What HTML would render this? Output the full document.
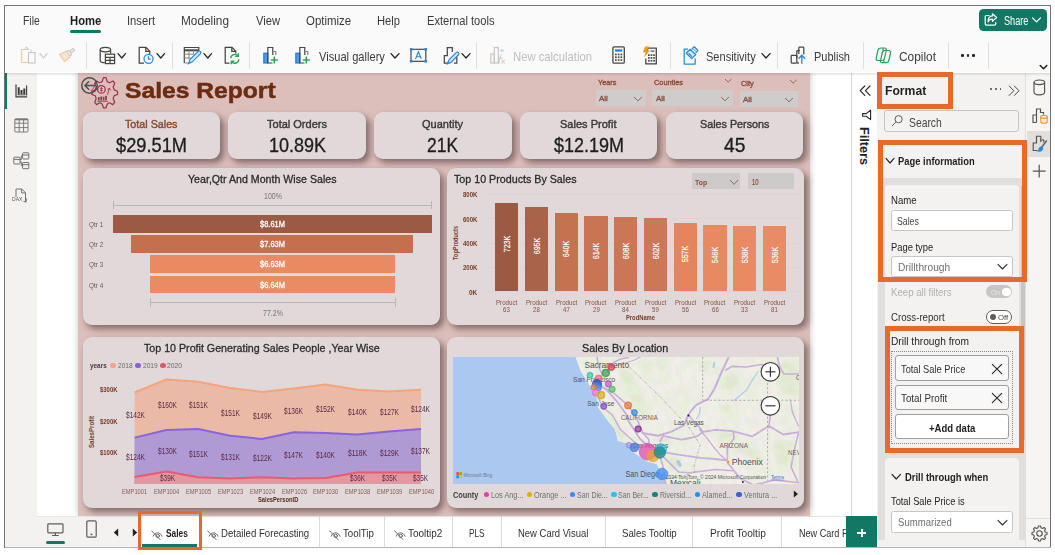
<!DOCTYPE html>
<html><head><meta charset="utf-8"><title>Sales Report</title><style>
html,body{margin:0;padding:0;}
body{width:1055px;height:555px;overflow:hidden;background:#fff;position:relative;font-family:"Liberation Sans",sans-serif;}
.a{position:absolute;display:block;box-sizing:border-box;}
.t{position:absolute;white-space:nowrap;transform-origin:0 50%;display:block;}
</style></head><body>
<div class="a" style="left:5.00px;top:6.00px;width:1045.00px;height:66.50px;background:#ffffff;"></div>
<div class="a" style="left:6.30px;top:7.30px;width:1042.70px;height:65.20px;background:#fafafa;"></div>
<div class="a" style="left:5.00px;top:72.50px;width:32.30px;height:474.50px;background:#f3f2f1;"></div>
<div class="a" style="left:4.50px;top:72.50px;width:2.10px;height:36.00px;background:#117865;"></div>
<div class="a" style="left:37.30px;top:72.50px;width:813.70px;height:443.50px;background:#ffffff;"></div>
<span class="t" style="left:22.50px;top:14.95px;font-size:12.5px;line-height:12.5px;color:#3b3a39;transform:scaleX(0.8291);">File</span>
<span class="t" style="left:70.00px;top:14.95px;font-size:12.5px;line-height:12.5px;color:#201f1e;transform:scaleX(0.9013);font-weight:bold;">Home</span>
<div class="a" style="left:70.00px;top:30.30px;width:31.30px;height:3.20px;background:#117865;border-radius:1.5px;"></div>
<span class="t" style="left:127.00px;top:14.95px;font-size:12.5px;line-height:12.5px;color:#3b3a39;transform:scaleX(0.8956);">Insert</span>
<span class="t" style="left:181.00px;top:14.95px;font-size:12.5px;line-height:12.5px;color:#3b3a39;transform:scaleX(0.9462);">Modeling</span>
<span class="t" style="left:255.50px;top:14.95px;font-size:12.5px;line-height:12.5px;color:#3b3a39;transform:scaleX(0.8932);">View</span>
<span class="t" style="left:305.50px;top:14.95px;font-size:12.5px;line-height:12.5px;color:#3b3a39;transform:scaleX(0.9165);">Optimize</span>
<span class="t" style="left:377.00px;top:14.95px;font-size:12.5px;line-height:12.5px;color:#3b3a39;transform:scaleX(0.8946);">Help</span>
<span class="t" style="left:427.00px;top:14.95px;font-size:12.5px;line-height:12.5px;color:#3b3a39;transform:scaleX(0.8913);">External tools</span>
<div class="a" style="left:978.60px;top:9.10px;width:68.60px;height:21.60px;background:#117865;border-radius:4.5px;"></div>
<svg class="a" style="left:983.20px;top:12.20px;" width="15.4" height="15.4" viewBox="0 0 14 14"><g fill="none" stroke="#fff" stroke-width="1.1" stroke-linecap="round" stroke-linejoin="round"><path d="M5.5 3.2H3.2A1.2 1.2 0 0 0 2 4.4v6.4A1.2 1.2 0 0 0 3.200 12h7.2a1.2 1.2 0 0 0 1.2-1.2V9.6"/><path d="M8.6 1.6 12.4 5 8.600 8.400V6.4C6.4 6.400 5.200 7.200 4.600 9c0-3.200 1.600-5.200 4-5.400z"/></g></svg>
<span class="t" style="left:1004.20px;top:14.60px;font-size:12px;line-height:12px;color:#ffffff;transform:scaleX(0.7619);">Share</span>
<svg class="a" style="left:1031.20px;top:16.30px;" width="11" height="8" viewBox="0 0 11 8"><path d="M1.5 1.8 5.5 5.800 9.500 1.800" fill="none" stroke="#fff" stroke-width="1.2" stroke-linecap="round" stroke-linejoin="round"/></svg>
<div class="a" style="left:85.50px;top:42.00px;width:1.00px;height:27.00px;background:#e1dfdd;"></div>
<div class="a" style="left:171.50px;top:42.00px;width:1.00px;height:27.00px;background:#e1dfdd;"></div>
<div class="a" style="left:249.30px;top:42.00px;width:1.00px;height:27.00px;background:#e1dfdd;"></div>
<div class="a" style="left:476.00px;top:42.00px;width:1.00px;height:27.00px;background:#e1dfdd;"></div>
<div class="a" style="left:669.70px;top:42.00px;width:1.00px;height:27.00px;background:#e1dfdd;"></div>
<div class="a" style="left:777.10px;top:42.00px;width:1.00px;height:27.00px;background:#e1dfdd;"></div>
<div class="a" style="left:862.50px;top:42.00px;width:1.00px;height:27.00px;background:#e1dfdd;"></div>
<div class="a" style="left:947.50px;top:42.00px;width:1.00px;height:27.00px;background:#e1dfdd;"></div>
<div class="a" style="left:987.50px;top:42.00px;width:1.00px;height:27.00px;background:#e1dfdd;"></div>
<svg class="a" style="left:20.00px;top:46.00px;" width="17" height="19" viewBox="0 0 17 19"><g fill="none" stroke-width="1.1"><path d="M5 3.5H1.600V16.500H8" stroke="#f2c9a0"/><path d="M4.500 3.500 6.500 1.200 8.500 3.500Z" stroke="#d0d0d0" fill="#fafafa"/><path d="M11 3.500v3" stroke="#f2c9a0"/><rect x="8.500" y="6.500" width="6.500" height="10.500" stroke="#c8c6c4" fill="#fafafa"/></g></svg>
<svg class="a" style="left:38.50px;top:52.00px;" width="9" height="8" viewBox="0 0 9 8"><path d="M1 1.6 4.5 6 8.0 1.6" fill="none" stroke="#c8c6c4" stroke-width="1.1" stroke-linecap="round" stroke-linejoin="round"/></svg>
<svg class="a" style="left:58.00px;top:47.00px;" width="18" height="16" viewBox="0 0 18 16"><g fill="none" stroke-width="1.1" stroke-linejoin="round"><path d="M1.500 7.500 9 4 12 10 6.500 14.500Z" stroke="#f2c39a" fill="#fbe6d3"/><path d="M9.500 4.500 11.500 3.500 13.500 7.500 11.800 8.700" stroke="#c8c6c4"/><path d="M12.200 3.800 15.300 1.500 16.600 3.600 13.300 5.800" stroke="#c8c6c4"/></g></svg>
<svg class="a" style="left:98.50px;top:46.00px;" width="17" height="19" viewBox="0 0 17 19"><g fill="none" stroke="#484644" stroke-width="1.25"><path d="M1.200 3.600v10.800c0 1.300 2 2.200 4.600 2.200"/><ellipse cx="6.400" cy="3.600" rx="5.200" ry="2.300"/><path d="M11.600 3.600v4"/><rect x="6.400" y="8.200" width="9.200" height="9.400" fill="#fafafa"/><path d="M6.400 11.300h9.200M6.400 14.400h9.200M11 11.300v6.300"/></g></svg>
<svg class="a" style="left:117.00px;top:52.00px;" width="9.5" height="8" viewBox="0 0 9.5 8"><path d="M1 1.6 4.8 6 8.5 1.6" fill="none" stroke="#252423" stroke-width="1.3" stroke-linecap="round" stroke-linejoin="round"/></svg>
<svg class="a" style="left:138.00px;top:46.00px;" width="17" height="19" viewBox="0 0 17 19"><g fill="none" stroke-width="1.25"><path d="M6 17H1.200V1.400H8L11.800 5.200V8" stroke="#484644"/><path d="M7.800 1.600V5.400H11.600" stroke="#484644"/><circle cx="10.500" cy="12.800" r="4.500" stroke="#2b88d8" fill="#fafafa"/><path d="M10.500 10.200v2.800h2.200" stroke="#2b88d8"/></g></svg>
<svg class="a" style="left:156.30px;top:52.00px;" width="9.5" height="8" viewBox="0 0 9.5 8"><path d="M1 1.6 4.8 6 8.5 1.6" fill="none" stroke="#252423" stroke-width="1.3" stroke-linecap="round" stroke-linejoin="round"/></svg>
<svg class="a" style="left:182.50px;top:46.00px;" width="19" height="19" viewBox="0 0 19 19"><g fill="none" stroke-width="1.2"><path d="M1.300 17V1.500H15.800V5" stroke="#484644"/><path d="M1.300 4.300H15.800" stroke="#484644" stroke-width="2"/><path d="M1.300 8.200H10M1.300 12H7.500M6 4.300V13.500M10.500 4.300V8.500M1.300 17H5" stroke="#8a8886" stroke-width="1"/><path d="M5.500 17.600 7 13.500 15 5.500a1.600 1.600 0 0 1 2.300 2.300L9.300 15.800Z" stroke="#2b88d8" fill="#d6ebfb"/></g></svg>
<svg class="a" style="left:202.60px;top:52.00px;" width="9.5" height="8" viewBox="0 0 9.5 8"><path d="M1 1.6 4.8 6 8.5 1.6" fill="none" stroke="#252423" stroke-width="1.3" stroke-linecap="round" stroke-linejoin="round"/></svg>
<svg class="a" style="left:224.00px;top:46.00px;" width="17" height="19" viewBox="0 0 17 19"><g fill="none" stroke-width="1.25"><path d="M5.500 17H1.200V1.400H8L11.800 5.200V7.500" stroke="#484644"/><path d="M7.800 1.600V5.400H11.600" stroke="#484644"/><path d="M6.800 12.300a4 4 0 0 1 7.200-2.300M14.800 13.300a4 4 0 0 1-7.200 2.300" stroke="#2ea44f" stroke-width="1.4"/><path d="M14.300 7.300V10.300H11.300M7.300 18.300V15.300H10.300" stroke="#2ea44f" stroke-width="1.4"/></g></svg>
<svg class="a" style="left:262.80px;top:46.00px;" width="16" height="19" viewBox="0 0 16 19"><g fill="none" stroke-width="1.2"><rect x=".800" y="7.200" width="4" height="9.800" fill="#4a9be0" stroke="#2b7cd3"/><path d="M9.500 17H4.800V1.500H9.800V9" stroke="#484644"/><path d="M9.800 5.500H12.800V9" stroke="#8a8886"/><path d="M11.300 10.500V17.500M7.800 14H14.800" stroke="#2ea44f" stroke-width="1.500"/></g></svg>
<svg class="a" style="left:295.00px;top:46.00px;" width="16" height="19" viewBox="0 0 16 19"><g fill="none" stroke-width="1.2"><rect x=".800" y="7.200" width="4" height="9.800" fill="#4a9be0" stroke="#2b7cd3"/><path d="M9.500 17H4.800V1.500H9.800V9" stroke="#484644"/><path d="M9.800 5.500H12.800V9" stroke="#8a8886"/><path d="M11.300 10.500V17.500M7.800 14H14.800" stroke="#2ea44f" stroke-width="1.500"/></g></svg>
<span class="t" style="left:318.50px;top:50.80px;font-size:12.2px;line-height:12.2px;color:#3b3a39;transform:scaleX(0.9124);">Visual gallery</span>
<svg class="a" style="left:389.80px;top:52.00px;" width="10" height="8" viewBox="0 0 10 8"><path d="M1 1.6 5.0 6 9.0 1.6" fill="none" stroke="#252423" stroke-width="1.3" stroke-linecap="round" stroke-linejoin="round"/></svg>
<svg class="a" style="left:408.50px;top:47.00px;" width="19" height="17" viewBox="0 0 19 17"><rect x="2" y="2.300" width="14.800" height="12" fill="none" stroke="#484644" stroke-width="1.200"/><g fill="#2b88d8"><rect x=".800" y="1.100" width="2.600" height="2.600"/><rect x="15.500" y="1.100" width="2.600" height="2.600"/><rect x=".800" y="13" width="2.600" height="2.600"/><rect x="15.500" y="13" width="2.600" height="2.600"/></g><path d="M6.500 12 9.400 4.800 12.300 12M7.500 9.800H11.300" fill="none" stroke="#2b88d8" stroke-width="1.100"/></svg>
<svg class="a" style="left:442.50px;top:46.00px;" width="17" height="19" viewBox="0 0 17 19"><g fill="none" stroke-width="1.250"><path d="M5 17H1.300V9.500H4.300V1.500H9.300V6" stroke="#484644"/><path d="M11 17H13.800V10.500" stroke="#484644"/><path d="M4.500 17.800 6 13.800 13.200 6.600a1.500 1.500 0 0 1 2.200 2.200L8.300 16.200Z" stroke="#2b88d8" fill="#d6ebfb"/></g></svg>
<svg class="a" style="left:461.00px;top:52.00px;" width="10" height="8" viewBox="0 0 10 8"><path d="M1 1.6 5.0 6 9.0 1.6" fill="none" stroke="#252423" stroke-width="1.3" stroke-linecap="round" stroke-linejoin="round"/></svg>
<svg class="a" style="left:489.50px;top:46.00px;" width="16" height="19" viewBox="0 0 16 19"><g fill="none" stroke="#c8c6c4" stroke-width="1.200"><rect x=".800" y="8" width="3.500" height="9"/><rect x="4.300" y="1.500" width="4" height="15.500"/><path d="M10.500 4.500h3" stroke="#a9d3f2" stroke-width="2"/><path d="M8 17.500c2 0 1.500-9 4-9.500M9 12h3.500M11.500 17.500l3.500-4M11.800 13.500l3 4" stroke-width="1"/></g></svg>
<span class="t" style="left:513.00px;top:50.80px;font-size:12.2px;line-height:12.2px;color:#c0bebc;transform:scaleX(0.9246);">New calculation</span>
<svg class="a" style="left:611.50px;top:46.00px;" width="13.5" height="18.5" viewBox="0 0 13.5 18.5"><rect x=".900" y=".900" width="11.400" height="16.300" rx="1.200" fill="#fafafa" stroke="#484644" stroke-width="1.300"/><rect x="3" y="3.300" width="7.200" height="2.400" fill="#2b88d8"/><g fill="#484644"><rect x="3" y="7.600" width="1.700" height="1.700"/><rect x="5.800" y="7.600" width="1.700" height="1.700"/><rect x="8.500" y="7.600" width="1.700" height="1.700"/><rect x="3" y="10.400" width="1.700" height="1.700"/><rect x="5.800" y="10.400" width="1.700" height="1.700"/><rect x="8.500" y="10.400" width="1.700" height="1.700"/><rect x="3" y="13.200" width="1.700" height="1.700"/><rect x="5.800" y="13.200" width="1.700" height="1.700"/><rect x="8.500" y="13.200" width="1.700" height="1.700"/></g></svg>
<svg class="a" style="left:641.50px;top:45.50px;" width="16" height="19" viewBox="0 0 16 19"><path d="M5.500 6.500V2.200H14.300V17.800H3.800V12.500" fill="#fafafa" stroke="#484644" stroke-width="1.300"/><rect x="8.500" y="4.300" width="4" height="1.800" fill="#8a8886"/><g fill="#484644"><rect x="6" y="8.300" width="1.700" height="1.700"/><rect x="8.600" y="8.300" width="1.700" height="1.700"/><rect x="11.200" y="8.300" width="1.700" height="1.700"/><rect x="6" y="11.100" width="1.700" height="1.700"/><rect x="8.600" y="11.100" width="1.700" height="1.700"/><rect x="11.200" y="11.100" width="1.700" height="1.700"/><rect x="6" y="13.900" width="1.700" height="1.700"/><rect x="8.600" y="13.900" width="1.700" height="1.700"/><rect x="11.200" y="13.900" width="1.700" height="1.700"/></g><path d="M3.200 .500H7.300L5.200 4.300H7.800L2.200 11.500 3.600 6.300H.800Z" fill="#f7941d"/></svg>
<svg class="a" style="left:683.00px;top:45.50px;" width="16" height="19" viewBox="0 0 16 19"><g fill="none" stroke="#2b88d8" stroke-width="1.250" stroke-linejoin="round"><path d="M5 3H1.200V18H12.200V12.500"/><path d="M3.300 7.200 7.200 3.300 12.600 8.700 8.700 12.600Z" fill="#d6ebfb"/><path d="M5.700 7.300 9 10.600"/><path d="M8.800 3.200 11.200 .800 15 4.600 12.600 7"/><path d="M10.300 2.800 13.200 5.700M12 1.400 14.500 3.900" stroke-width="1"/></g></svg>
<span class="t" style="left:706.30px;top:50.80px;font-size:12.2px;line-height:12.2px;color:#3b3a39;transform:scaleX(0.9050);">Sensitivity</span>
<svg class="a" style="left:761.30px;top:52.00px;" width="10" height="8" viewBox="0 0 10 8"><path d="M1 1.6 5.0 6 9.0 1.6" fill="none" stroke="#252423" stroke-width="1.3" stroke-linecap="round" stroke-linejoin="round"/></svg>
<svg class="a" style="left:790.00px;top:46.00px;" width="17" height="19" viewBox="0 0 17 19"><g fill="none" stroke-width="1.250"><rect x="1.200" y="9.300" width="5.600" height="7.700" rx=".800" stroke="#484644"/><path d="M6.800 12V5.500a.800 .800 0 0 1 .8-.8H9.800" stroke="#484644"/><path d="M8.800 8V2a.800 .800 0 0 1 .8-.8H13a.800 .800 0 0 1 .8 .8V8.500" stroke="#484644"/><path d="M6.800 17H9" stroke="#484644"/><path d="M11.800 17.800V9.800M8.500 12.800 11.800 9.300 15.200 12.800" stroke="#2b88d8" stroke-width="1.400"/></g></svg>
<span class="t" style="left:814.00px;top:50.80px;font-size:12.2px;line-height:12.2px;color:#3b3a39;transform:scaleX(0.8997);">Publish</span>
<svg class="a" style="left:874.50px;top:47.00px;" width="17" height="16.5" viewBox="0 0 17 16.5"><g fill="none" stroke="#2a9d5c" stroke-width="1.200" stroke-linejoin="round"><path d="M6.200 1H9.500C11 1 11.500 2 11.200 3.500L9.500 11.500C9.200 13 8 13.500 6.800 13.500H3C1.500 13.500 .800 12.500 1.200 11L3 3C3.400 1.500 4.800 1 6.200 1Z"/><path d="M9.800 3.500H13.600C15.200 3.500 15.900 4.500 15.500 6L13.800 13.500C13.500 15 12.300 15.700 10.800 15.700H7.200C5.800 15.700 5.300 14.700 5.600 13.300L7.300 5.500C7.600 4.200 8.500 3.500 9.800 3.500Z"/><path d="M7.500 1.200C8.500 2 8.300 3.500 8 4.800M9.300 15.500C8.300 14.500 8.600 13 9 11.800"/></g></svg>
<span class="t" style="left:898.50px;top:50.80px;font-size:12.2px;line-height:12.2px;color:#3b3a39;transform:scaleX(0.9743);">Copilot</span>
<div class="a" style="left:961.00px;top:54.20px;width:2.60px;height:2.60px;background:#201f1e;border-radius:50%;"></div>
<div class="a" style="left:966.50px;top:54.20px;width:2.60px;height:2.60px;background:#201f1e;border-radius:50%;"></div>
<div class="a" style="left:972.00px;top:54.20px;width:2.60px;height:2.60px;background:#201f1e;border-radius:50%;"></div>
<svg class="a" style="left:1039.00px;top:63.50px;" width="9" height="7" viewBox="0 0 9 7"><path d="M1.200 1.500 4.500 4.800 7.800 1.500" fill="none" stroke="#201f1e" stroke-width="1.500" stroke-linecap="round" stroke-linejoin="round"/></svg>
<svg class="a" style="left:14.50px;top:83.50px;" width="13" height="14" viewBox="0 0 13 14"><g fill="none" stroke="#3b3a39"><path d="M1 .600V12.800H12.200" stroke-width="1.200"/><path d="M3.700 11V3.200M6.500 11V6M9.300 11V4.500" stroke-width="2"/><path d="M11.600 11.500V1.500" stroke-width="1.100"/><path d="M2.600 11H10.500" stroke-width="1" stroke="#8a8886"/></g></svg>
<svg class="a" style="left:13.50px;top:117.50px;" width="15" height="15" viewBox="0 0 15 15"><g fill="none" stroke="#7a7876" stroke-width=".950"><rect x=".800" y=".800" width="13.200" height="13.200" rx="1"/><path d="M.800 5.200H14M.800 9.600H14M5.200 .800V14M9.600 .800V14"/><path d="M.800 1.600H14" stroke-width="1.400"/></g></svg>
<svg class="a" style="left:12.50px;top:151.50px;" width="17" height="18" viewBox="0 0 17 18"><g fill="none" stroke="#6e6c6a" stroke-width=".950"><rect x=".800" y="5.200" width="6.200" height="6.800" rx=".600"/><path d="M.800 7.400H7"/><rect x="9.600" y=".800" width="6.200" height="6.200" rx=".600"/><path d="M9.600 3H15.800"/><rect x="9.600" y="10.500" width="6.200" height="6.200" rx=".600"/><path d="M9.600 12.700H15.800"/><path d="M7 7.500H8.300V3.900H9.600M7 9.800H8.300V13.600H9.600"/></g></svg>
<svg class="a" style="left:12.00px;top:187.50px;" width="16" height="16.5" viewBox="0 0 16 16.5"><g fill="none" stroke="#6e6c6a" stroke-width=".950"><path d="M4 9V1H9.800L13.500 4.700V13.500H11.500"/><path d="M9.600 1.200V4.900H13.300"/><path d="M13.500 9.500c1.400 1.500 1.400 3.800 0 5.300" stroke-width=".800"/></g></svg>
<span class="t" style="left:12.30px;top:197.40px;font-size:5.2px;line-height:5.2px;color:#605e5c;transform:scaleX(0.9820);">DAX</span>
<div class="a" style="left:37.30px;top:516.00px;width:808.70px;height:31.00px;background:#f3f2f1;"></div>
<div class="a" style="left:202.00px;top:516.00px;width:644.00px;height:31.00px;background:#ffffff;"></div>
<div class="a" style="left:37.30px;top:515.60px;width:813.70px;height:0.80px;background:#e8e6e4;"></div>
<svg class="a" style="left:46.50px;top:522.50px;" width="17" height="13.5" viewBox="0 0 17 13.5"><g fill="none" stroke="#605e5c" stroke-width="1.200"><rect x=".800" y=".800" width="15.200" height="9" rx=".800"/><path d="M8.400 9.800V12.300M5 12.500H11.800"/></g></svg>
<div class="a" style="left:45.50px;top:540.80px;width:19.30px;height:2.80px;background:#117865;border-radius:1.5px;"></div>
<svg class="a" style="left:85.80px;top:520.00px;" width="11" height="18" viewBox="0 0 11 18"><g fill="none" stroke="#605e5c" stroke-width="1.200"><rect x=".800" y=".800" width="9.400" height="16.400" rx="1.300"/></g><rect x="4.600" y="13.600" width="1.800" height="1.600" fill="#605e5c"/></svg>
<svg class="a" style="left:113.00px;top:527.50px;" width="6" height="9" viewBox="0 0 6 9"><path d="M5.200 .600V8.400L.800 4.500Z" fill="#201f1e"/></svg>
<svg class="a" style="left:131.50px;top:527.50px;" width="6" height="9" viewBox="0 0 6 9"><path d="M.800 .600V8.400L5.200 4.500Z" fill="#201f1e"/></svg>
<div class="a" style="left:141.20px;top:514.00px;width:57.40px;height:33.00px;background:#ffffff;"></div>
<div class="a" style="left:142.00px;top:543.80px;width:55.40px;height:3.40px;background:#117865;"></div>
<svg class="a" style="left:151.30px;top:529.50px;" width="11.5" height="10.5" viewBox="0 0 11.5 10.5"><g fill="none" stroke="#605e5c" stroke-width=".900" stroke-linecap="round"><path d="M2.200 6.200C3.200 3.800 5 2.800 6.600 2.800 8.600 2.800 10.300 4.200 11 6.300"/><circle cx="6.700" cy="5.900" r="1.700"/><path d="M.600 .800 9.400 9.900"/></g></svg>
<span class="t" style="left:165.70px;top:527.55px;font-size:11.5px;line-height:11.5px;color:#201f1e;transform:scaleX(0.7287);font-weight:bold;">Sales</span>
<svg class="a" style="left:207.30px;top:529.50px;" width="11.5" height="10.5" viewBox="0 0 11.5 10.5"><g fill="none" stroke="#605e5c" stroke-width=".900" stroke-linecap="round"><path d="M2.200 6.200C3.200 3.800 5 2.800 6.600 2.800 8.600 2.800 10.300 4.200 11 6.300"/><circle cx="6.700" cy="5.900" r="1.700"/><path d="M.600 .800 9.400 9.900"/></g></svg>
<span class="t" style="left:221.30px;top:527.75px;font-size:11.5px;line-height:11.5px;color:#323130;transform:scaleX(0.8362);">Detailed Forecasting</span>
<svg class="a" style="left:329.30px;top:529.50px;" width="11.5" height="10.5" viewBox="0 0 11.5 10.5"><g fill="none" stroke="#605e5c" stroke-width=".900" stroke-linecap="round"><path d="M2.200 6.200C3.200 3.800 5 2.800 6.600 2.800 8.600 2.800 10.300 4.200 11 6.300"/><circle cx="6.700" cy="5.900" r="1.700"/><path d="M.600 .800 9.400 9.900"/></g></svg>
<span class="t" style="left:343.30px;top:527.75px;font-size:11.5px;line-height:11.5px;color:#323130;transform:scaleX(0.8432);">ToolTip</span>
<svg class="a" style="left:394.20px;top:529.50px;" width="11.5" height="10.5" viewBox="0 0 11.5 10.5"><g fill="none" stroke="#605e5c" stroke-width=".900" stroke-linecap="round"><path d="M2.200 6.200C3.200 3.800 5 2.800 6.600 2.800 8.600 2.800 10.300 4.200 11 6.300"/><circle cx="6.700" cy="5.900" r="1.700"/><path d="M.600 .800 9.400 9.900"/></g></svg>
<span class="t" style="left:408.00px;top:527.75px;font-size:11.5px;line-height:11.5px;color:#323130;transform:scaleX(0.8678);">Tooltip2</span>
<span class="t" style="left:469.00px;top:527.75px;font-size:11.5px;line-height:11.5px;color:#323130;transform:scaleX(0.7176);">PLS</span>
<span class="t" style="left:518.00px;top:527.75px;font-size:11.5px;line-height:11.5px;color:#323130;transform:scaleX(0.8228);">New Card Visual</span>
<span class="t" style="left:621.80px;top:527.75px;font-size:11.5px;line-height:11.5px;color:#323130;transform:scaleX(0.8416);">Sales Tooltip</span>
<span class="t" style="left:709.70px;top:527.75px;font-size:11.5px;line-height:11.5px;color:#323130;transform:scaleX(0.8847);">Profit Tooltip</span>
<span class="t" style="left:799.00px;top:527.75px;font-size:11.5px;line-height:11.5px;color:#323130;transform:scaleX(0.7906);">New Card F</span>
<div class="a" style="left:319.30px;top:516.00px;width:1.00px;height:31.00px;background:#dddbd9;"></div>
<div class="a" style="left:384.00px;top:516.00px;width:1.00px;height:31.00px;background:#dddbd9;"></div>
<div class="a" style="left:451.90px;top:516.00px;width:1.00px;height:31.00px;background:#dddbd9;"></div>
<div class="a" style="left:500.70px;top:516.00px;width:1.00px;height:31.00px;background:#dddbd9;"></div>
<div class="a" style="left:605.00px;top:516.00px;width:1.00px;height:31.00px;background:#dddbd9;"></div>
<div class="a" style="left:692.20px;top:516.00px;width:1.00px;height:31.00px;background:#dddbd9;"></div>
<div class="a" style="left:781.20px;top:516.00px;width:1.00px;height:31.00px;background:#dddbd9;"></div>
<div class="a" style="left:846.00px;top:516.40px;width:31.20px;height:30.60px;background:#117865;"></div>
<div class="a" style="left:857.30px;top:532.20px;width:8.60px;height:2.00px;background:#ffffff;"></div>
<div class="a" style="left:860.60px;top:528.90px;width:2.00px;height:8.60px;background:#ffffff;"></div>
<div class="a" style="left:37.3px;top:72.5px;width:813.7px;height:443.5px;overflow:hidden;"><div class="a" style="left:40.7px;top:-10px;width:732px;height:453.5px;background:#dcbeba;box-shadow:0 0 7px rgba(0,0,0,.22);"></div></div>
<div class="a" style="left:5.00px;top:72.50px;width:1045.00px;height:3.00px;background:linear-gradient(rgba(0,0,0,.12),rgba(0,0,0,0));"></div>
<svg class="a" style="left:90.00px;top:75.50px;" width="30" height="34" viewBox="0 0 30 34"><g fill="none" stroke="#a2304f" stroke-width="1.250" stroke-linejoin="round" stroke-linecap="round"><path d="M13.39 1.68L16.01 1.68L17.21 5.63L19.62 6.81L22.84 5.01L24.70 7.20L23.18 11.00L24.18 13.84L27.53 15.25L27.53 18.35L24.18 19.76L23.18 22.60L24.70 26.40L22.84 28.59L19.62 26.79L17.21 27.97L16.01 31.92L13.39 31.92L12.19 27.97L9.78 26.79L6.56 28.59L4.70 26.40L6.22 22.60L5.22 19.76L1.87 18.35L1.87 15.25L5.22 13.84L6.22 11.00L4.70 7.20L6.56 5.01L9.78 6.81L12.19 5.63Z"/><circle cx="11.4" cy="13.4" r="3.800"/><path d="M11.4 11.3V15.5M10.5 12.5H12.3M10.5 14.4H12.3" stroke-width=".800"/><path d="M8.8 24.5V21.1M11.2 24.5V20.5M13.6 24.5V20.8M16.0 24.5V19.7" stroke-width="1.700" stroke-linecap="butt"/><path d="M7.6 25.4H17.6" stroke-width=".800"/><path d="M17.6 18.3L19.3 12.3M18.0 13.7L19.3 12.1L20.5 14.0" stroke-width=".900"/><path d="M1.0 15.0Q4.0 13.5 5.5 7.0" stroke-width=".900"/></g></svg>
<svg class="a" style="left:80.00px;top:75.50px;" width="19.5" height="19.5" viewBox="0 0 19.5 19.5"><g fill="none" stroke="#48524f" stroke-width="1.500" stroke-linecap="round" stroke-linejoin="round"><circle cx="9.500" cy="9.500" r="7.750"/><path d="M14 9.500H5.200M8.600 5.700 4.900 9.500 8.600 13.300"/></g></svg>
<span class="t" style="left:125.40px;top:80.45px;font-size:22.5px;line-height:22.5px;color:#6b2c11;transform:scaleX(1.0949);font-weight:bold;-webkit-text-stroke:0.5px #6b2c11;">Sales Report</span>
<span class="t" style="left:597.50px;top:79.00px;font-size:8px;line-height:8px;color:#8a4b3a;transform:scaleX(0.9075);-webkit-text-stroke:0.35px #8a4b3a;">Years</span>
<div class="a" style="left:595.70px;top:90.00px;width:50.60px;height:15.80px;background:#cfcccc;"></div>
<span class="t" style="left:599.20px;top:95.30px;font-size:8px;line-height:8px;color:#8a4b3a;transform:scaleX(0.9897);-webkit-text-stroke:0.35px #8a4b3a;">All</span>
<svg class="a" style="left:633.30px;top:96.20px;" width="10" height="6.2" viewBox="0 0 10 6.2"><path d="M1 1 5.0 4.8 9.0 1" fill="none" stroke="#8a5f55" stroke-width=".900"/></svg>
<span class="t" style="left:653.80px;top:79.00px;font-size:8px;line-height:8px;color:#8a4b3a;transform:scaleX(0.9184);-webkit-text-stroke:0.35px #8a4b3a;">Counties</span>
<svg class="a" style="left:724.00px;top:78.30px;" width="8.5" height="5.5" viewBox="0 0 8.5 5.5"><path d="M1 1 4.2 4.1 7.5 1" fill="none" stroke="#8a5f55" stroke-width=".900"/></svg>
<div class="a" style="left:652.00px;top:90.00px;width:81.00px;height:15.80px;background:#cfcccc;"></div>
<span class="t" style="left:655.80px;top:95.30px;font-size:8px;line-height:8px;color:#8a4b3a;transform:scaleX(0.9897);-webkit-text-stroke:0.35px #8a4b3a;">All</span>
<svg class="a" style="left:720.30px;top:96.20px;" width="10" height="6.2" viewBox="0 0 10 6.2"><path d="M1 1 5.0 4.8 9.0 1" fill="none" stroke="#8a5f55" stroke-width=".900"/></svg>
<span class="t" style="left:741.30px;top:79.70px;font-size:8px;line-height:8px;color:#8a4b3a;transform:scaleX(0.9218);-webkit-text-stroke:0.35px #8a4b3a;">City</span>
<svg class="a" style="left:788.50px;top:78.60px;" width="8.5" height="5.5" viewBox="0 0 8.5 5.5"><path d="M1 1 4.2 4.1 7.5 1" fill="none" stroke="#8a5f55" stroke-width=".900"/></svg>
<div class="a" style="left:739.50px;top:91.00px;width:58.00px;height:15.80px;background:#cfcccc;"></div>
<span class="t" style="left:743.20px;top:96.30px;font-size:8px;line-height:8px;color:#8a4b3a;transform:scaleX(0.9897);-webkit-text-stroke:0.35px #8a4b3a;">All</span>
<svg class="a" style="left:784.20px;top:97.20px;" width="10" height="6.2" viewBox="0 0 10 6.2"><path d="M1 1 5.0 4.8 9.0 1" fill="none" stroke="#8a5f55" stroke-width=".900"/></svg>
<div class="a" style="left:82.50px;top:112.30px;width:137.70px;height:47.00px;background:#e0d8d9;border-radius:9px;box-shadow:3.5px 4px 6px rgba(75,55,55,.6);"></div>
<span class="t" style="left:125.15px;top:118.80px;font-size:11.4px;line-height:11.4px;color:#8b4a30;transform:scaleX(0.9414);-webkit-text-stroke:0.42px #8b4a30;">Total Sales</span>
<span class="t" style="left:115.90px;top:134.10px;font-size:21px;line-height:21px;color:#1e1e1e;transform:scaleX(0.8688);-webkit-text-stroke:0.35px #1e1e1e;">$29.51M</span>
<div class="a" style="left:228.25px;top:112.30px;width:137.70px;height:47.00px;background:#e0d8d9;border-radius:9px;box-shadow:3.5px 4px 6px rgba(75,55,55,.6);"></div>
<span class="t" style="left:267.15px;top:118.80px;font-size:11.4px;line-height:11.4px;color:#3a3a3a;transform:scaleX(0.9664);-webkit-text-stroke:0.42px #3a3a3a;">Total Orders</span>
<span class="t" style="left:268.65px;top:134.10px;font-size:21px;line-height:21px;color:#1e1e1e;transform:scaleX(0.8564);-webkit-text-stroke:0.35px #1e1e1e;">10.89K</span>
<div class="a" style="left:374.00px;top:112.30px;width:137.70px;height:47.00px;background:#e0d8d9;border-radius:9px;box-shadow:3.5px 4px 6px rgba(75,55,55,.6);"></div>
<span class="t" style="left:422.40px;top:118.80px;font-size:11.4px;line-height:11.4px;color:#3a3a3a;transform:scaleX(0.9657);-webkit-text-stroke:0.42px #3a3a3a;">Quantity</span>
<span class="t" style="left:427.40px;top:134.10px;font-size:21px;line-height:21px;color:#1e1e1e;transform:scaleX(0.8296);-webkit-text-stroke:0.35px #1e1e1e;">21K</span>
<div class="a" style="left:519.75px;top:112.30px;width:137.70px;height:47.00px;background:#e0d8d9;border-radius:9px;box-shadow:3.5px 4px 6px rgba(75,55,55,.6);"></div>
<span class="t" style="left:560.40px;top:118.80px;font-size:11.4px;line-height:11.4px;color:#3a3a3a;transform:scaleX(0.9692);-webkit-text-stroke:0.42px #3a3a3a;">Sales Profit</span>
<span class="t" style="left:553.65px;top:134.10px;font-size:21px;line-height:21px;color:#1e1e1e;transform:scaleX(0.8565);-webkit-text-stroke:0.35px #1e1e1e;">$12.19M</span>
<div class="a" style="left:665.50px;top:112.30px;width:137.70px;height:47.00px;background:#e0d8d9;border-radius:9px;box-shadow:3.5px 4px 6px rgba(75,55,55,.6);"></div>
<span class="t" style="left:699.65px;top:118.80px;font-size:11.4px;line-height:11.4px;color:#3a3a3a;transform:scaleX(0.9455);-webkit-text-stroke:0.42px #3a3a3a;">Sales Persons</span>
<span class="t" style="left:723.65px;top:134.10px;font-size:21px;line-height:21px;color:#1e1e1e;transform:scaleX(0.9204);-webkit-text-stroke:0.35px #1e1e1e;">45</span>
<div class="a" style="left:82.70px;top:168.00px;width:357.30px;height:157.00px;background:#e0d8d9;border-radius:9px;box-shadow:3.5px 4px 6px rgba(75,55,55,.6);"></div>
<div class="a" style="left:446.80px;top:168.00px;width:357.20px;height:157.00px;background:#e0d8d9;border-radius:9px;box-shadow:3.5px 4px 6px rgba(75,55,55,.6);"></div>
<div class="a" style="left:82.70px;top:337.00px;width:357.30px;height:170.70px;background:#e0d8d9;border-radius:9px;box-shadow:3.5px 4px 6px rgba(75,55,55,.6);"></div>
<div class="a" style="left:446.80px;top:337.00px;width:357.20px;height:170.70px;background:#e0d8d9;border-radius:9px;box-shadow:3.5px 4px 6px rgba(75,55,55,.6);"></div>
<span class="t" style="left:187.50px;top:174.15px;font-size:11.5px;line-height:11.5px;color:#2b2b2b;transform:scaleX(0.9243);-webkit-text-stroke:0.3px #2b2b2b;">Year,Qtr And Month Wise Sales</span>
<span class="t" style="left:264.00px;top:192.80px;font-size:8.2px;line-height:8.2px;color:#777777;transform:scaleX(0.8583);">100%</span>
<div class="a" style="left:113.00px;top:205.00px;width:319.00px;height:1.00px;background:#bdb6b6;"></div>
<div class="a" style="left:113.00px;top:200.80px;width:1.00px;height:8.70px;background:#bdb6b6;"></div>
<div class="a" style="left:431.30px;top:200.80px;width:1.00px;height:8.70px;background:#bdb6b6;"></div>
<div class="a" style="left:113.20px;top:214.50px;width:318.40px;height:18.20px;background:#9d5a42;"></div>
<span class="t" style="left:260.00px;top:219.80px;font-size:8.6px;line-height:8.6px;color:#ffffff;transform:scaleX(0.8715);-webkit-text-stroke:0.3px #ffffff;">$8.61M</span>
<span class="t" style="left:89.00px;top:220.70px;font-size:7.4px;line-height:7.4px;color:#6b5a58;transform:scaleX(0.8633);">Qtr 1</span>
<div class="a" style="left:131.40px;top:235.00px;width:281.80px;height:18.00px;background:#c4704f;"></div>
<span class="t" style="left:260.00px;top:240.20px;font-size:8.6px;line-height:8.6px;color:#ffffff;transform:scaleX(0.8715);-webkit-text-stroke:0.3px #ffffff;">$7.63M</span>
<span class="t" style="left:89.00px;top:241.10px;font-size:7.4px;line-height:7.4px;color:#6b5a58;transform:scaleX(0.8633);">Qtr 2</span>
<div class="a" style="left:149.80px;top:255.30px;width:245.20px;height:17.90px;background:#e98a63;"></div>
<span class="t" style="left:260.00px;top:260.45px;font-size:8.6px;line-height:8.6px;color:#ffffff;transform:scaleX(0.8715);-webkit-text-stroke:0.3px #ffffff;">$6.63M</span>
<span class="t" style="left:89.00px;top:261.35px;font-size:7.4px;line-height:7.4px;color:#6b5a58;transform:scaleX(0.8633);">Qtr 3</span>
<div class="a" style="left:149.60px;top:275.50px;width:245.70px;height:17.80px;background:#e98b65;"></div>
<span class="t" style="left:260.00px;top:280.60px;font-size:8.6px;line-height:8.6px;color:#ffffff;transform:scaleX(0.8715);-webkit-text-stroke:0.3px #ffffff;">$6.64M</span>
<span class="t" style="left:89.00px;top:281.50px;font-size:7.4px;line-height:7.4px;color:#6b5a58;transform:scaleX(0.8633);">Qtr 4</span>
<div class="a" style="left:149.50px;top:302.00px;width:246.00px;height:1.00px;background:#bdb6b6;"></div>
<div class="a" style="left:149.50px;top:298.00px;width:1.00px;height:9.00px;background:#bdb6b6;"></div>
<div class="a" style="left:394.50px;top:298.00px;width:1.00px;height:9.00px;background:#bdb6b6;"></div>
<span class="t" style="left:262.50px;top:310.10px;font-size:8.2px;line-height:8.2px;color:#777777;transform:scaleX(0.8602);">77.2%</span>
<span class="t" style="left:453.50px;top:174.15px;font-size:11.5px;line-height:11.5px;color:#2b2b2b;transform:scaleX(0.9302);-webkit-text-stroke:0.3px #2b2b2b;">Top 10 Products By Sales</span>
<span class="t" style="left:469.10px;top:288.60px;font-size:7px;line-height:7px;color:#7a3b24;transform:scaleX(0.9164);font-weight:bold;">0K</span>
<div class="a" style="left:484px;top:291.30px;width:315px;height:0;border-top:1px dotted #d3c9c9;opacity:.55;"></div>
<span class="t" style="left:462.90px;top:264.25px;font-size:7px;line-height:7px;color:#7a3b24;transform:scaleX(0.8605);font-weight:bold;">200K</span>
<div class="a" style="left:484px;top:266.95px;width:315px;height:0;border-top:1px dotted #d3c9c9;opacity:.55;"></div>
<span class="t" style="left:462.90px;top:239.90px;font-size:7px;line-height:7px;color:#7a3b24;transform:scaleX(0.8605);font-weight:bold;">400K</span>
<div class="a" style="left:484px;top:242.60px;width:315px;height:0;border-top:1px dotted #d3c9c9;opacity:.55;"></div>
<span class="t" style="left:462.90px;top:215.55px;font-size:7px;line-height:7px;color:#7a3b24;transform:scaleX(0.8605);font-weight:bold;">600K</span>
<div class="a" style="left:484px;top:218.25px;width:315px;height:0;border-top:1px dotted #d3c9c9;opacity:.55;"></div>
<span class="t" style="left:462.90px;top:191.20px;font-size:7px;line-height:7px;color:#7a3b24;transform:scaleX(0.8605);font-weight:bold;">800K</span>
<div class="a" style="left:484px;top:193.90px;width:315px;height:0;border-top:1px dotted #d3c9c9;opacity:.55;"></div>
<span class="t" style="left:456.30px;top:243.00px;font-size:6.5px;line-height:6.5px;color:#7a3b24;transform:translate(-50%,-50%) rotate(-90deg) scaleX(0.8586);transform-origin:50% 50%;font-weight:bold;">TopProducts</span>
<div class="a" style="left:495.00px;top:203.28px;width:23.30px;height:87.52px;background:#9d5a42;"></div>
<span class="t" style="left:506.95px;top:244.04px;font-size:8.5px;line-height:8.5px;color:#ffffff;transform:translate(-50%,-50%) rotate(-90deg) scaleX(0.8362);transform-origin:50% 50%;-webkit-text-stroke:0.15px #ffffff;">723K</span>
<span class="t" style="left:496.00px;top:299.10px;font-size:7.2px;line-height:7.2px;color:#8a5040;transform:scaleX(0.8584);">Product</span>
<span class="t" style="left:503.25px;top:306.00px;font-size:7.2px;line-height:7.2px;color:#8a5040;transform:scaleX(0.8491);">63</span>
<div class="a" style="left:524.75px;top:206.67px;width:23.30px;height:84.13px;background:#a96348;"></div>
<span class="t" style="left:536.70px;top:245.74px;font-size:8.5px;line-height:8.5px;color:#ffffff;transform:translate(-50%,-50%) rotate(-90deg) scaleX(0.8362);transform-origin:50% 50%;-webkit-text-stroke:0.15px #ffffff;">695K</span>
<span class="t" style="left:525.75px;top:299.10px;font-size:7.2px;line-height:7.2px;color:#8a5040;transform:scaleX(0.8584);">Product</span>
<span class="t" style="left:533.00px;top:306.00px;font-size:7.2px;line-height:7.2px;color:#8a5040;transform:scaleX(0.8491);">28</span>
<div class="a" style="left:554.50px;top:213.33px;width:23.30px;height:77.47px;background:#c57251;"></div>
<span class="t" style="left:566.45px;top:249.06px;font-size:8.5px;line-height:8.5px;color:#ffffff;transform:translate(-50%,-50%) rotate(-90deg) scaleX(0.8362);transform-origin:50% 50%;-webkit-text-stroke:0.15px #ffffff;">640K</span>
<span class="t" style="left:555.50px;top:299.10px;font-size:7.2px;line-height:7.2px;color:#8a5040;transform:scaleX(0.8584);">Product</span>
<span class="t" style="left:562.75px;top:306.00px;font-size:7.2px;line-height:7.2px;color:#8a5040;transform:scaleX(0.8491);">47</span>
<div class="a" style="left:584.25px;top:216.48px;width:23.30px;height:74.32px;background:#c97553;"></div>
<span class="t" style="left:596.20px;top:250.64px;font-size:8.5px;line-height:8.5px;color:#ffffff;transform:translate(-50%,-50%) rotate(-90deg) scaleX(0.8362);transform-origin:50% 50%;-webkit-text-stroke:0.15px #ffffff;">614K</span>
<span class="t" style="left:585.25px;top:299.10px;font-size:7.2px;line-height:7.2px;color:#8a5040;transform:scaleX(0.8584);">Product</span>
<span class="t" style="left:592.50px;top:306.00px;font-size:7.2px;line-height:7.2px;color:#8a5040;transform:scaleX(0.8491);">29</span>
<div class="a" style="left:614.00px;top:217.20px;width:23.30px;height:73.60px;background:#cb7755;"></div>
<span class="t" style="left:625.95px;top:251.00px;font-size:8.5px;line-height:8.5px;color:#ffffff;transform:translate(-50%,-50%) rotate(-90deg) scaleX(0.8362);transform-origin:50% 50%;-webkit-text-stroke:0.15px #ffffff;">608K</span>
<span class="t" style="left:615.00px;top:299.10px;font-size:7.2px;line-height:7.2px;color:#8a5040;transform:scaleX(0.8584);">Product</span>
<span class="t" style="left:622.25px;top:306.00px;font-size:7.2px;line-height:7.2px;color:#8a5040;transform:scaleX(0.8491);">84</span>
<div class="a" style="left:643.75px;top:217.93px;width:23.30px;height:72.87px;background:#cc7856;"></div>
<span class="t" style="left:655.70px;top:251.36px;font-size:8.5px;line-height:8.5px;color:#ffffff;transform:translate(-50%,-50%) rotate(-90deg) scaleX(0.8362);transform-origin:50% 50%;-webkit-text-stroke:0.15px #ffffff;">602K</span>
<span class="t" style="left:644.75px;top:299.10px;font-size:7.2px;line-height:7.2px;color:#8a5040;transform:scaleX(0.8584);">Product</span>
<span class="t" style="left:652.00px;top:306.00px;font-size:7.2px;line-height:7.2px;color:#8a5040;transform:scaleX(0.8491);">59</span>
<div class="a" style="left:673.50px;top:223.38px;width:23.30px;height:67.42px;background:#e5855e;"></div>
<span class="t" style="left:685.45px;top:254.09px;font-size:8.5px;line-height:8.5px;color:#ffffff;transform:translate(-50%,-50%) rotate(-90deg) scaleX(0.8362);transform-origin:50% 50%;-webkit-text-stroke:0.15px #ffffff;">557K</span>
<span class="t" style="left:674.50px;top:299.10px;font-size:7.2px;line-height:7.2px;color:#8a5040;transform:scaleX(0.8584);">Product</span>
<span class="t" style="left:681.75px;top:306.00px;font-size:7.2px;line-height:7.2px;color:#8a5040;transform:scaleX(0.8491);">56</span>
<div class="a" style="left:703.25px;top:224.71px;width:23.30px;height:66.09px;background:#e88962;"></div>
<span class="t" style="left:715.20px;top:254.75px;font-size:8.5px;line-height:8.5px;color:#ffffff;transform:translate(-50%,-50%) rotate(-90deg) scaleX(0.8362);transform-origin:50% 50%;-webkit-text-stroke:0.15px #ffffff;">546K</span>
<span class="t" style="left:704.25px;top:299.10px;font-size:7.2px;line-height:7.2px;color:#8a5040;transform:scaleX(0.8584);">Product</span>
<span class="t" style="left:711.50px;top:306.00px;font-size:7.2px;line-height:7.2px;color:#8a5040;transform:scaleX(0.8491);">66</span>
<div class="a" style="left:733.00px;top:225.68px;width:23.30px;height:65.12px;background:#e98a63;"></div>
<span class="t" style="left:744.95px;top:255.24px;font-size:8.5px;line-height:8.5px;color:#ffffff;transform:translate(-50%,-50%) rotate(-90deg) scaleX(0.8362);transform-origin:50% 50%;-webkit-text-stroke:0.15px #ffffff;">538K</span>
<span class="t" style="left:734.00px;top:299.10px;font-size:7.2px;line-height:7.2px;color:#8a5040;transform:scaleX(0.8584);">Product</span>
<span class="t" style="left:741.25px;top:306.00px;font-size:7.2px;line-height:7.2px;color:#8a5040;transform:scaleX(0.8491);">33</span>
<div class="a" style="left:762.75px;top:225.92px;width:23.30px;height:64.88px;background:#e98b65;"></div>
<span class="t" style="left:774.70px;top:255.36px;font-size:8.5px;line-height:8.5px;color:#ffffff;transform:translate(-50%,-50%) rotate(-90deg) scaleX(0.8362);transform-origin:50% 50%;-webkit-text-stroke:0.15px #ffffff;">536K</span>
<span class="t" style="left:763.75px;top:299.10px;font-size:7.2px;line-height:7.2px;color:#8a5040;transform:scaleX(0.8584);">Product</span>
<span class="t" style="left:771.00px;top:306.00px;font-size:7.2px;line-height:7.2px;color:#8a5040;transform:scaleX(0.8491);">81</span>
<span class="t" style="left:626.00px;top:313.90px;font-size:7px;line-height:7px;color:#7a3b24;transform:scaleX(0.8283);font-weight:bold;">ProdName</span>
<div class="a" style="left:692.10px;top:173.20px;width:48.30px;height:15.60px;background:#cdcaca;"></div>
<span class="t" style="left:695.30px;top:178.50px;font-size:8px;line-height:8px;color:#8a4b3a;transform:scaleX(0.8602);font-weight:bold;">Top</span>
<svg class="a" style="left:729.30px;top:178.50px;" width="10" height="7" viewBox="0 0 10 7"><path d="M1 1 5 5.400 9 1" fill="none" stroke="#8a5f55" stroke-width=".900"/></svg>
<div class="a" style="left:748.00px;top:173.20px;width:46.00px;height:15.60px;background:#cdcaca;"></div>
<span class="t" style="left:752.20px;top:177.50px;font-size:9px;line-height:9px;color:#8a5040;transform:scaleX(0.6593);-webkit-text-stroke:0.2px #8a5040;">10</span>
<span class="t" style="left:144.30px;top:342.95px;font-size:11.5px;line-height:11.5px;color:#2b2b2b;transform:scaleX(0.9279);-webkit-text-stroke:0.3px #2b2b2b;">Top 10 Profit Generating Sales People ,Year Wise</span>
<span class="t" style="left:89.50px;top:362.00px;font-size:8px;line-height:8px;color:#4a3a38;transform:scaleX(0.7986);font-weight:bold;">years</span>
<div class="a" style="left:110.40px;top:362.90px;width:5.60px;height:5.60px;background:#f2a57e;border-radius:50%;"></div>
<span class="t" style="left:117.50px;top:362.00px;font-size:8px;line-height:8px;color:#6b6b6b;transform:scaleX(0.8260);">2018</span>
<div class="a" style="left:135.20px;top:362.90px;width:5.60px;height:5.60px;background:#8b5fd6;border-radius:50%;"></div>
<span class="t" style="left:142.50px;top:362.00px;font-size:8px;line-height:8px;color:#6b6b6b;transform:scaleX(0.8260);">2019</span>
<div class="a" style="left:160.20px;top:362.90px;width:5.60px;height:5.60px;background:#e05a6d;border-radius:50%;"></div>
<span class="t" style="left:167.00px;top:362.00px;font-size:8px;line-height:8px;color:#6b6b6b;transform:scaleX(0.8428);">2020</span>
<svg class="a" style="left:82.00px;top:370.00px;" width="358" height="120" viewBox="0 0 358 120"><path d="M40 19.3H352" stroke="#d6cdcd" stroke-width=".700" stroke-dasharray="1 2.500"/><path d="M40 51.4H352" stroke="#d6cdcd" stroke-width=".700" stroke-dasharray="1 2.500"/><path d="M40 82.6H352" stroke="#d6cdcd" stroke-width=".700" stroke-dasharray="1 2.500"/><polygon points="52.6,22.5 84.4,9.4 116.2,11.7 148.1,18.0 179.9,22.0 211.7,18.6 243.5,14.4 275.3,19.8 307.2,21.6 339.0,19.8 339.0,113.8 52.6,113.8" fill="#ebbaa6"/><polygon points="52.6,67.6 84.4,60.0 116.2,59.0 148.1,65.8 179.9,68.9 211.7,62.2 243.5,63.0 275.3,64.5 307.2,61.6 339.0,59.0 339.0,113.8 52.6,113.8" fill="#b09ad4"/><polygon points="52.6,107.0 84.4,101.5 116.2,107.3 148.1,108.4 179.9,107.3 211.7,108.4 243.5,107.9 275.3,102.5 307.2,102.5 339.0,102.5 339.0,113.8 52.6,113.8" fill="#e5969f"/><polyline points="52.6,22.5 84.4,9.4 116.2,11.7 148.1,18.0 179.9,22.0 211.7,18.6 243.5,14.4 275.3,19.8 307.2,21.6 339.0,19.8" fill="none" stroke="#f4a47d" stroke-width="2" stroke-linejoin="round"/><polyline points="52.6,67.6 84.4,60.0 116.2,59.0 148.1,65.8 179.9,68.9 211.7,62.2 243.5,63.0 275.3,64.5 307.2,61.6 339.0,59.0" fill="none" stroke="#8a64dc" stroke-width="2" stroke-linejoin="round"/><polyline points="52.6,107.0 84.4,101.5 116.2,107.3 148.1,108.4 179.9,107.3 211.7,108.4 243.5,107.9 275.3,102.5 307.2,102.5 339.0,102.5" fill="none" stroke="#e65c72" stroke-width="2" stroke-linejoin="round"/></svg>
<span class="t" style="left:99.50px;top:386.05px;font-size:7.3px;line-height:7.3px;color:#7a3b24;transform:scaleX(0.8135);font-weight:bold;">$300K</span>
<span class="t" style="left:99.50px;top:418.15px;font-size:7.3px;line-height:7.3px;color:#7a3b24;transform:scaleX(0.8135);font-weight:bold;">$200K</span>
<span class="t" style="left:99.50px;top:449.35px;font-size:7.3px;line-height:7.3px;color:#7a3b24;transform:scaleX(0.8135);font-weight:bold;">$100K</span>
<span class="t" style="left:92.30px;top:432.00px;font-size:6.5px;line-height:6.5px;color:#7a3b24;transform:translate(-50%,-50%) rotate(-90deg) scaleX(0.9423);transform-origin:50% 50%;font-weight:bold;">SalesProfit</span>
<span class="t" style="left:126.00px;top:410.65px;font-size:8.5px;line-height:8.5px;color:#5a2a48;transform:scaleX(0.7730);">$142K</span>
<span class="t" style="left:157.50px;top:400.65px;font-size:8.5px;line-height:8.5px;color:#5a2a48;transform:scaleX(0.7730);">$160K</span>
<span class="t" style="left:189.10px;top:401.35px;font-size:8.5px;line-height:8.5px;color:#5a2a48;transform:scaleX(0.7730);">$151K</span>
<span class="t" style="left:221.00px;top:408.65px;font-size:8.5px;line-height:8.5px;color:#5a2a48;transform:scaleX(0.7730);">$151K</span>
<span class="t" style="left:252.80px;top:411.65px;font-size:8.5px;line-height:8.5px;color:#5a2a48;transform:scaleX(0.7730);">$149K</span>
<span class="t" style="left:284.30px;top:406.65px;font-size:8.5px;line-height:8.5px;color:#5a2a48;transform:scaleX(0.7730);">$136K</span>
<span class="t" style="left:316.20px;top:404.65px;font-size:8.5px;line-height:8.5px;color:#5a2a48;transform:scaleX(0.7730);">$152K</span>
<span class="t" style="left:347.70px;top:408.35px;font-size:8.5px;line-height:8.5px;color:#5a2a48;transform:scaleX(0.7730);">$140K</span>
<span class="t" style="left:379.50px;top:407.65px;font-size:8.5px;line-height:8.5px;color:#5a2a48;transform:scaleX(0.7730);">$127K</span>
<span class="t" style="left:411.40px;top:405.35px;font-size:8.5px;line-height:8.5px;color:#5a2a48;transform:scaleX(0.7730);">$124K</span>
<span class="t" style="left:126.00px;top:453.45px;font-size:8.5px;line-height:8.5px;color:#5a2a48;transform:scaleX(0.7730);">$124K</span>
<span class="t" style="left:157.50px;top:446.65px;font-size:8.5px;line-height:8.5px;color:#5a2a48;transform:scaleX(0.7730);">$130K</span>
<span class="t" style="left:189.10px;top:449.65px;font-size:8.5px;line-height:8.5px;color:#5a2a48;transform:scaleX(0.7730);">$151K</span>
<span class="t" style="left:221.00px;top:453.45px;font-size:8.5px;line-height:8.5px;color:#5a2a48;transform:scaleX(0.7730);">$131K</span>
<span class="t" style="left:252.80px;top:454.35px;font-size:8.5px;line-height:8.5px;color:#5a2a48;transform:scaleX(0.7730);">$122K</span>
<span class="t" style="left:284.30px;top:451.25px;font-size:8.5px;line-height:8.5px;color:#5a2a48;transform:scaleX(0.7730);">$147K</span>
<span class="t" style="left:316.20px;top:451.25px;font-size:8.5px;line-height:8.5px;color:#5a2a48;transform:scaleX(0.7730);">$140K</span>
<span class="t" style="left:347.70px;top:449.45px;font-size:8.5px;line-height:8.5px;color:#5a2a48;transform:scaleX(0.7934);">$118K</span>
<span class="t" style="left:379.50px;top:448.65px;font-size:8.5px;line-height:8.5px;color:#5a2a48;transform:scaleX(0.7730);">$129K</span>
<span class="t" style="left:411.40px;top:446.65px;font-size:8.5px;line-height:8.5px;color:#5a2a48;transform:scaleX(0.7730);">$137K</span>
<span class="t" style="left:159.50px;top:473.85px;font-size:8.5px;line-height:8.5px;color:#5a2a48;transform:scaleX(0.7556);">$39K</span>
<span class="t" style="left:349.70px;top:473.85px;font-size:8.5px;line-height:8.5px;color:#5a2a48;transform:scaleX(0.7556);">$36K</span>
<span class="t" style="left:381.50px;top:474.05px;font-size:8.5px;line-height:8.5px;color:#5a2a48;transform:scaleX(0.7556);">$35K</span>
<span class="t" style="left:413.40px;top:474.05px;font-size:8.5px;line-height:8.5px;color:#5a2a48;transform:scaleX(0.7556);">$35K</span>
<span class="t" style="left:122.40px;top:488.05px;font-size:7.3px;line-height:7.3px;color:#8a5a55;transform:scaleX(0.7860);">EMP1001</span>
<span class="t" style="left:154.22px;top:488.05px;font-size:7.3px;line-height:7.3px;color:#8a5a55;transform:scaleX(0.7860);">EMP1004</span>
<span class="t" style="left:186.04px;top:488.05px;font-size:7.3px;line-height:7.3px;color:#8a5a55;transform:scaleX(0.7860);">EMP1005</span>
<span class="t" style="left:217.86px;top:488.05px;font-size:7.3px;line-height:7.3px;color:#8a5a55;transform:scaleX(0.7860);">EMP1023</span>
<span class="t" style="left:249.68px;top:488.05px;font-size:7.3px;line-height:7.3px;color:#8a5a55;transform:scaleX(0.7860);">EMP1024</span>
<span class="t" style="left:281.50px;top:488.05px;font-size:7.3px;line-height:7.3px;color:#8a5a55;transform:scaleX(0.7860);">EMP1026</span>
<span class="t" style="left:313.32px;top:488.05px;font-size:7.3px;line-height:7.3px;color:#8a5a55;transform:scaleX(0.7860);">EMP1030</span>
<span class="t" style="left:345.14px;top:488.05px;font-size:7.3px;line-height:7.3px;color:#8a5a55;transform:scaleX(0.7860);">EMP1038</span>
<span class="t" style="left:376.96px;top:488.05px;font-size:7.3px;line-height:7.3px;color:#8a5a55;transform:scaleX(0.7860);">EMP1039</span>
<span class="t" style="left:408.78px;top:488.05px;font-size:7.3px;line-height:7.3px;color:#8a5a55;transform:scaleX(0.7860);">EMP1040</span>
<span class="t" style="left:257.70px;top:495.90px;font-size:7px;line-height:7px;color:#5a2a1a;transform:scaleX(0.8220);font-weight:bold;">SalesPersonID</span>
<span class="t" style="left:582.40px;top:342.95px;font-size:11.5px;line-height:11.5px;color:#2b2b2b;transform:scaleX(0.9374);-webkit-text-stroke:0.3px #2b2b2b;">Sales By Location</span>
<svg class="a" style="left:452.60px;top:357.00px;overflow:hidden;" width="346.8" height="127.4" viewBox="0 0 346.8 127.4"><defs><filter id="bl" x="-20%" y="-20%" width="140%" height="140%"><feGaussianBlur stdDeviation="2.2"/></filter><filter id="tx" x="0" y="0" width="100%" height="100%"><feTurbulence type="fractalNoise" baseFrequency=".055 .075" numOctaves="3" seed="7"/><feColorMatrix type="matrix" values="0 0 0 0 .80  0 0 0 0 .88  0 0 0 0 .70  0 4.200 0 0 -1.800"/></filter><filter id="tg" x="0" y="0" width="100%" height="100%"><feTurbulence type="fractalNoise" baseFrequency=".16 .10" numOctaves="2" seed="11"/><feColorMatrix type="matrix" values="0 0 0 0 .80  0 0 0 0 .79  0 0 0 0 .76  3.600 0 0 0 -1.550"/></filter><clipPath id="lc"><polygon points="122.5,0.0 127.6,14.4 134.5,25.0 138.9,33.3 144.0,42.0 145.2,51.0 150.4,58.0 156.4,66.0 160.8,71.0 163.4,78.0 164.6,84.0 169.4,85.5 175.0,86.5 180.2,95.6 188.0,100.8 194.4,104.7 203.6,107.3 207.4,115.0 212.6,125.5 213.4,127.5 347.4,127.5 347.4,0.0"/></clipPath></defs><rect width="346.8" height="127.4" fill="#abc8f0"/><polygon points="122.5,0.0 127.6,14.4 134.5,25.0 138.9,33.3 144.0,42.0 145.2,51.0 150.4,58.0 156.4,66.0 160.8,71.0 163.4,78.0 164.6,84.0 169.4,85.5 175.0,86.5 180.2,95.6 188.0,100.8 194.4,104.7 203.6,107.3 207.4,115.0 212.6,125.5 213.4,127.5 347.4,127.5 347.4,0.0" fill="#f1efe8"/><g filter="url(#bl)" fill="#d3e5b8" opacity=".6"><polygon points="165.4,9.0 177.4,15.0 189.4,39.0 199.4,61.0 192.4,65.0 180.4,47.0 169.4,27.0"/><polygon points="137.4,3.0 147.4,1.0 153.4,9.0 145.4,13.0"/><polygon points="202.4,1.0 215.4,1.0 213.4,13.0 204.4,11.0"/><polygon points="269.4,19.0 283.4,16.0 287.4,27.0 275.4,34.0 265.4,30.0"/><polygon points="321.4,5.0 346.4,3.0 346.4,39.0 331.4,37.0 323.4,23.0"/><polygon points="267.4,48.0 277.4,46.0 279.4,56.0 269.4,56.0"/><polygon points="149.4,48.0 159.4,57.0 171.4,77.0 173.4,84.0 165.4,81.0 155.4,65.0"/><polygon points="263.4,75.0 281.4,74.0 285.4,84.0 267.4,86.0"/><polygon points="277.4,86.0 297.4,87.0 309.4,99.0 303.4,103.0 285.4,95.0"/><polygon points="319.4,85.0 341.4,83.0 343.4,111.0 325.4,107.0"/><polygon points="213.4,100.0 227.4,101.0 227.4,113.0 215.4,113.0"/><polygon points="247.4,3.0 259.4,3.0 255.4,15.0 247.4,13.0"/><polygon points="187.4,3.0 199.4,5.0 197.4,15.0 188.4,13.0"/><polygon points="203.4,81.0 217.4,79.0 219.4,87.0 205.4,89.0"/></g><polygon points="0.0,0.0 122.5,0.0 127.6,14.4 134.5,25.0 138.9,33.3 144.0,42.0 145.2,51.0 150.4,58.0 156.4,66.0 160.8,71.0 163.4,78.0 164.6,84.0 169.4,85.5 175.0,86.5 180.2,95.6 188.0,100.8 194.4,104.7 203.6,107.3 207.4,115.0 212.6,125.5 213.4,127.5 0.0,127.5" fill="#abc8f0"/><g clip-path="url(#lc)"><rect width="346.8" height="127.4" filter="url(#tx)" opacity=".75"/><rect width="346.8" height="127.4" filter="url(#tg)" opacity=".45"/></g><g fill="none" stroke="#a9c6ee" stroke-width="1.200" opacity=".9"><polyline points="305.4,14.0 299.4,23.0 293.4,33.0 285.4,40.0 280.4,44.0"/><polyline points="261.4,5.0 260.4,11.0" stroke-width="2"/><polyline points="247.4,50.0 246.4,57.0 243.4,62.0"/></g><ellipse cx="226.0" cy="106.39999999999998" rx="1.800" ry="3.800" fill="#a9c6ee" transform="rotate(-28 226.0 106.39999999999998)"/><g fill="none" stroke="#c8addb" stroke-linejoin="round" stroke-linecap="round"><polyline points="144.0,0.0 145.4,9.0 149.0,17.0 147.4,24.0" stroke-width="1.5"/><polyline points="153.4,15.0 160.4,5.6 167.4,2.0 175.4,0.5" stroke-width="1.5"/><polyline points="158.4,10.0 169.4,7.0 181.4,3.0 187.4,0.0" stroke-width="1.2"/><polyline points="148.4,29.0 154.4,33.7 164.4,45.0 173.4,57.5 175.0,63.2 186.7,81.4 191.9,86.5" stroke-width="1.8"/><polyline points="151.4,31.0 159.4,35.0 166.4,40.8 175.4,49.0 183.1,59.8 189.3,74.9 195.8,82.6 195.8,89.0" stroke-width="1.6"/><polyline points="145.4,41.0 149.0,48.4 154.4,54.0 159.4,58.0 167.2,72.3 180.2,84.0 187.4,89.0" stroke-width="1.4"/><polyline points="275.8,0.0 271.4,9.0 267.8,17.0 264.4,25.0 261.4,32.0 255.2,42.0 242.6,48.4 237.4,55.0 235.4,58.0 230.8,68.4 217.8,74.9 204.9,78.8 189.3,76.0" stroke-width="2.0"/><polyline points="272.9,13.0 279.2,9.3 293.1,10.0 308.2,7.5 317.4,9.0 327.1,10.6 330.9,17.0 343.4,17.0 347.4,16.5" stroke-width="1.7"/><polyline points="324.4,0.0 325.4,5.0 327.1,10.6" stroke-width="1.7"/><polyline points="207.4,84.0 210.1,78.8 228.2,82.6 237.4,81.0 245.1,78.8 249.8,74.9 262.8,72.9 279.7,74.2 299.1,79.4 316.0,69.0 330.3,77.5 347.4,74.9" stroke-width="1.8"/><polyline points="235.6,58.0 241.4,65.0 247.2,71.0 249.8,74.9" stroke-width="1.6"/><polyline points="246.4,72.3 254.2,81.4 261.9,91.7 267.4,98.0 273.2,103.0" stroke-width="1.3"/><polyline points="202.4,93.0 212.6,95.6 228.2,98.2 247.7,100.8 261.4,102.0 274.4,103.4" stroke-width="1.8"/><polyline points="274.4,102.0 274.4,90.4 281.0,81.4 280.4,74.9" stroke-width="1.7"/><polyline points="210.1,99.5 220.4,109.9 225.6,115.0 236.9,115.7 262.8,112.5 279.7,113.8" stroke-width="1.6"/><polyline points="274.4,105.4 281.0,113.8 287.4,121.6 300.4,128.0 309.4,126.0 321.2,122.9 344.4,125.5 347.4,126.0" stroke-width="1.7"/><polyline points="317.4,58.0 316.0,69.0" stroke-width="1.5"/><polyline points="345.8,74.9 341.9,90.4 338.1,109.9 344.4,124.0" stroke-width="1.6"/><polyline points="337.4,43.0 339.4,55.0 345.4,69.0" stroke-width="1.4"/><polyline points="202.4,95.0 207.4,100.8 210.1,109.9 211.4,119.0 212.9,127.5" stroke-width="1.6"/></g><g fill="none" stroke="#a9a5a1" stroke-width=".900" stroke-dasharray="2.200 2"><polyline points="249.7,0.0 249.7,43.3 347.4,43.3"/><polyline points="314.6,26.0 314.6,127.5"/><polyline points="176.4,10.0 207.4,40.0 235.4,69.7 247.2,87.8 240.8,109.9 242.0,115.0 235.4,117.5 213.4,122.0" stroke-dasharray="3 1.500 1 1.500" stroke-width=".800"/></g><g stroke="#e6e3db" stroke-width=".600" opacity=".5"><line x1="187.39999999999998" y1="0" x2="227.39999999999998" y2="127.4"/><line x1="195.39999999999998" y1="0" x2="235.39999999999998" y2="127.4"/><line x1="203.39999999999998" y1="0" x2="243.39999999999998" y2="127.4"/><line x1="211.39999999999998" y1="0" x2="251.39999999999998" y2="127.4"/><line x1="219.39999999999998" y1="0" x2="259.4" y2="127.4"/><line x1="227.39999999999998" y1="0" x2="267.4" y2="127.4"/><line x1="235.39999999999998" y1="0" x2="275.4" y2="127.4"/><line x1="243.39999999999998" y1="0" x2="283.4" y2="127.4"/><line x1="251.39999999999998" y1="0" x2="291.4" y2="127.4"/><line x1="259.4" y1="0" x2="299.4" y2="127.4"/><line x1="267.4" y1="0" x2="307.4" y2="127.4"/><line x1="275.4" y1="0" x2="315.4" y2="127.4"/><line x1="283.4" y1="0" x2="323.4" y2="127.4"/><line x1="291.4" y1="0" x2="331.4" y2="127.4"/><line x1="299.4" y1="0" x2="339.4" y2="127.4"/><line x1="307.4" y1="0" x2="347.4" y2="127.4"/><line x1="315.4" y1="0" x2="355.4" y2="127.4"/><line x1="323.4" y1="0" x2="363.4" y2="127.4"/><line x1="331.4" y1="0" x2="371.4" y2="127.4"/><line x1="339.4" y1="0" x2="379.4" y2="127.4"/><line x1="347.4" y1="0" x2="387.4" y2="127.4"/><line x1="355.4" y1="0" x2="395.4" y2="127.4"/><line x1="363.4" y1="0" x2="403.4" y2="127.4"/><line x1="371.4" y1="0" x2="411.4" y2="127.4"/><line x1="379.4" y1="0" x2="419.4" y2="127.4"/><line x1="387.4" y1="0" x2="427.4" y2="127.4"/></g><g font-family="Liberation Sans, sans-serif"><text x="0" y="0" font-size="8.8" fill="#505050"  transform="translate(131.40,11.36) scale(0.9421,1)">Sacramento</text><text x="0" y="0" font-size="8" fill="#555555"  transform="translate(120.00,24.96) scale(0.8272,1)">San Francisco</text><text x="0" y="0" font-size="8" fill="#555555"  transform="translate(134.30,48.66) scale(0.8124,1)">San Jose</text><text x="0" y="0" font-size="7" fill="#7a5f55"  transform="translate(167.90,62.89) scale(0.8784,1)">CALIFORNIA</text><text x="0" y="0" font-size="7.6" fill="#505050"  transform="translate(221.00,67.51) scale(0.8395,1)">Las Vegas</text><text x="0" y="0" font-size="8" fill="#555555"  transform="translate(179.90,90.76) scale(0.8098,1)">Los Angeles</text><text x="0" y="0" font-size="7" fill="#7a5f55"  transform="translate(266.40,91.29) scale(0.9192,1)">ARIZONA</text><text x="0" y="0" font-size="9.6" fill="#505050"  transform="translate(278.80,108.35) scale(0.8935,1)">Phoenix</text><text x="0" y="0" font-size="7" fill="#7a5f55"  transform="translate(335.10,97.79) scale(0.8893,1)">NEV</text><text x="0" y="0" font-size="8.3" fill="#505050"  transform="translate(172.40,120.07) scale(0.8643,1)">San Diego</text><text x="0" y="0" font-size="9" fill="#505050"  transform="translate(217.00,129.13) scale(0.9413,1)">Mexicali</text><text x="0" y="0" font-size="7.5" fill="#7a5040"  transform="translate(343.00,23.27) scale(0.9047,1)">C</text><text x="0" y="0" font-size="5.3" fill="#555555"  transform="translate(207.40,121.86) scale(0.9565,1)">© 2024 TomTom, © 2024 Microsoft Corporation</text><text x="0" y="0" font-size="5.3" fill="#3b6fd0"  transform="translate(317.90,121.86) scale(0.9149,1)">Terms</text><text x="0" y="0" font-size="5.2" fill="#737a86"  transform="translate(10.40,120.42) scale(0.8802,1)">Microsoft Bing</text></g><line x1="317.9" y1="123" x2="331.1" y2="123" stroke="#3b6fd0" stroke-width=".400"/><circle cx="235.39999999999998" cy="58.5" r="1" fill="#222"/><circle cx="275.19999999999993" cy="104.89999999999998" r="1.100" fill="#f08a3a"/><circle cx="289.9" cy="125" r=".900" fill="#222"/><rect x="3.3" y="115.2" width="2.700" height="2.900" fill="#f25022"/><rect x="6.3" y="115.2" width="2.700" height="2.900" fill="#7fba00"/><rect x="3.3" y="118.4" width="2.700" height="2.900" fill="#00a4ef"/><rect x="6.3" y="118.4" width="2.700" height="2.900" fill="#ffb900"/><circle cx="158.2" cy="10.2" r="3.4" fill="#d83a52" fill-opacity=".78" stroke="#d83a52" stroke-width=".700"/><circle cx="158.2" cy="10.2" r="1.43" fill="none" stroke="#ffffff" stroke-opacity=".35" stroke-width=".600"/><circle cx="152.8" cy="15.9" r="3.8" fill="#2e9e48" fill-opacity=".78" stroke="#2e9e48" stroke-width=".700"/><circle cx="152.8" cy="15.9" r="1.60" fill="none" stroke="#ffffff" stroke-opacity=".35" stroke-width=".600"/><circle cx="137.0" cy="18.2" r="3.0" fill="#2ec4a6" fill-opacity=".78" stroke="#2ec4a6" stroke-width=".700"/><circle cx="137.0" cy="18.2" r="1.26" fill="none" stroke="#ffffff" stroke-opacity=".35" stroke-width=".600"/><circle cx="145.6" cy="21.7" r="3.7" fill="#ee6a78" fill-opacity=".78" stroke="#ee6a78" stroke-width=".700"/><circle cx="145.6" cy="21.7" r="1.55" fill="none" stroke="#ffffff" stroke-opacity=".35" stroke-width=".600"/><circle cx="144.0" cy="27.0" r="4.6" fill="#2050d0" fill-opacity=".78" stroke="#2050d0" stroke-width=".700"/><circle cx="145.0" cy="30.4" r="3.5" fill="#3a86f0" fill-opacity=".78" stroke="#3a86f0" stroke-width=".700"/><circle cx="145.0" cy="30.4" r="1.47" fill="none" stroke="#ffffff" stroke-opacity=".35" stroke-width=".600"/><circle cx="155.4" cy="27.0" r="3.2" fill="#b455c8" fill-opacity=".78" stroke="#b455c8" stroke-width=".700"/><circle cx="155.4" cy="27.0" r="1.34" fill="none" stroke="#ffffff" stroke-opacity=".35" stroke-width=".600"/><circle cx="159.1" cy="32.3" r="3.2" fill="#4cbf60" fill-opacity=".78" stroke="#4cbf60" stroke-width=".700"/><circle cx="159.1" cy="32.3" r="1.34" fill="none" stroke="#ffffff" stroke-opacity=".35" stroke-width=".600"/><circle cx="140.8" cy="30.2" r="3.0" fill="#c8804a" fill-opacity=".78" stroke="#c8804a" stroke-width=".700"/><circle cx="140.8" cy="30.2" r="1.26" fill="none" stroke="#ffffff" stroke-opacity=".35" stroke-width=".600"/><circle cx="143.1" cy="35.5" r="3.7" fill="#e86acb" fill-opacity=".78" stroke="#e86acb" stroke-width=".700"/><circle cx="143.1" cy="35.5" r="1.55" fill="none" stroke="#ffffff" stroke-opacity=".35" stroke-width=".600"/><circle cx="148.0" cy="38.1" r="4.0" fill="#d4a81e" fill-opacity=".78" stroke="#d4a81e" stroke-width=".700"/><circle cx="148.0" cy="38.1" r="1.68" fill="none" stroke="#ffffff" stroke-opacity=".35" stroke-width=".600"/><circle cx="150.7" cy="49.3" r="3.1" fill="#7e4cc8" fill-opacity=".78" stroke="#7e4cc8" stroke-width=".700"/><circle cx="150.7" cy="49.3" r="1.30" fill="none" stroke="#ffffff" stroke-opacity=".35" stroke-width=".600"/><circle cx="175.1" cy="48.4" r="3.6" fill="#e8703a" fill-opacity=".78" stroke="#e8703a" stroke-width=".700"/><circle cx="175.1" cy="48.4" r="1.51" fill="none" stroke="#ffffff" stroke-opacity=".35" stroke-width=".600"/><circle cx="181.4" cy="55.5" r="3.0" fill="#2a86d8" fill-opacity=".78" stroke="#2a86d8" stroke-width=".700"/><circle cx="181.4" cy="55.5" r="1.26" fill="none" stroke="#ffffff" stroke-opacity=".35" stroke-width=".600"/><circle cx="185.1" cy="72.0" r="3.2" fill="#8a2a9a" fill-opacity=".78" stroke="#8a2a9a" stroke-width=".700"/><circle cx="185.1" cy="72.0" r="1.34" fill="none" stroke="#ffffff" stroke-opacity=".35" stroke-width=".600"/><circle cx="176.1" cy="88.2" r="2.9" fill="#a08ae8" fill-opacity=".78" stroke="#a08ae8" stroke-width=".700"/><circle cx="176.1" cy="88.2" r="1.22" fill="none" stroke="#ffffff" stroke-opacity=".35" stroke-width=".600"/><circle cx="181.5" cy="90.4" r="4.4" fill="#4a78d8" fill-opacity=".78" stroke="#4a78d8" stroke-width=".700"/><circle cx="208.1" cy="92.4" r="5.5" fill="#30b8e0" fill-opacity=".78" stroke="#30b8e0" stroke-width=".700"/><circle cx="194.5" cy="94.7" r="8.3" fill="#e052b0" fill-opacity=".78" stroke="#e052b0" stroke-width=".700"/><circle cx="200.1" cy="98.9" r="5.8" fill="#e8a030" fill-opacity=".78" stroke="#e8a030" stroke-width=".700"/><circle cx="206.8" cy="95.6" r="5.7" fill="#208a8a" fill-opacity=".78" stroke="#208a8a" stroke-width=".700"/><circle cx="209.1" cy="117.0" r="5.8" fill="#4090f0" fill-opacity=".78" stroke="#4090f0" stroke-width=".700"/><circle cx="317.4" cy="14.800000000000011" r="9.300" fill="#ffffff" stroke="#333" stroke-width="1.100"/><line x1="312.4" y1="14.800000000000011" x2="322.4" y2="14.800000000000011" stroke="#333" stroke-width="1.200"/><line x1="317.4" y1="9.800000000000011" x2="317.4" y2="19.80000000000001" stroke="#333" stroke-width="1.200"/><circle cx="317.4" cy="48.80000000000001" r="9.300" fill="#ffffff" stroke="#333" stroke-width="1.100"/><line x1="312.4" y1="48.80000000000001" x2="322.4" y2="48.80000000000001" stroke="#333" stroke-width="1.200"/></svg>
<span class="t" style="left:453.00px;top:490.75px;font-size:8.3px;line-height:8.3px;color:#404040;transform:scaleX(0.8886);font-weight:bold;">County</span>
<div class="a" style="left:483.50px;top:491.50px;width:5.60px;height:5.60px;background:#e83dae;border-radius:50%;"></div>
<span class="t" style="left:490.50px;top:490.85px;font-size:8.3px;line-height:8.3px;color:#707070;transform:scaleX(0.8804);">Los Ang...</span>
<div class="a" style="left:526.80px;top:491.50px;width:5.60px;height:5.60px;background:#e0b000;border-radius:50%;"></div>
<span class="t" style="left:533.70px;top:490.85px;font-size:8.3px;line-height:8.3px;color:#707070;transform:scaleX(0.8806);">Orange ...</span>
<div class="a" style="left:569.70px;top:491.50px;width:5.60px;height:5.60px;background:#3d8bf5;border-radius:50%;"></div>
<span class="t" style="left:576.60px;top:490.85px;font-size:8.3px;line-height:8.3px;color:#707070;transform:scaleX(0.8423);">San Die...</span>
<div class="a" style="left:611.20px;top:491.50px;width:5.60px;height:5.60px;background:#22c3ee;border-radius:50%;"></div>
<span class="t" style="left:618.00px;top:490.85px;font-size:8.3px;line-height:8.3px;color:#707070;transform:scaleX(0.8450);">San Ber...</span>
<div class="a" style="left:652.40px;top:491.50px;width:5.60px;height:5.60px;background:#1b7f7c;border-radius:50%;"></div>
<span class="t" style="left:659.70px;top:490.85px;font-size:8.3px;line-height:8.3px;color:#707070;transform:scaleX(0.8429);">Riversid...</span>
<div class="a" style="left:694.70px;top:491.50px;width:5.60px;height:5.60px;background:#1e90ff;border-radius:50%;"></div>
<span class="t" style="left:702.00px;top:490.85px;font-size:8.3px;line-height:8.3px;color:#707070;transform:scaleX(0.8756);">Alamed...</span>
<div class="a" style="left:736.20px;top:491.50px;width:5.60px;height:5.60px;background:#4060d0;border-radius:50%;"></div>
<span class="t" style="left:743.50px;top:490.85px;font-size:8.3px;line-height:8.3px;color:#707070;transform:scaleX(0.8801);">Ventura ...</span>
<svg class="a" style="left:793.00px;top:489.50px;" width="6" height="8" viewBox="0 0 6 8"><path d="M.800 .500 5 4 .800 7.500Z" fill="#222"/></svg>
<div class="a" style="left:851.50px;top:72.50px;width:25.50px;height:443.90px;background:#ffffff;"></div>
<div class="a" style="left:851.00px;top:72.50px;width:1.00px;height:443.90px;background:#d8d6d4;"></div>
<div class="a" style="left:877.00px;top:72.50px;width:148.70px;height:474.50px;background:#f3f2f1;"></div>
<div class="a" style="left:1025.70px;top:72.50px;width:24.30px;height:474.50px;background:#f6f5f4;"></div>
<div class="a" style="left:1025.20px;top:72.50px;width:1.00px;height:474.50px;background:#e1dfdd;"></div>
<div class="a" style="left:851.00px;top:72.50px;width:199.00px;height:3.00px;background:linear-gradient(rgba(0,0,0,.12),rgba(0,0,0,0));"></div>
<svg class="a" style="left:859.00px;top:85.00px;" width="12.5" height="11.5" viewBox="0 0 12.5 11.5"><g fill="none" stroke="#252423" stroke-width="1.150" stroke-linecap="round" stroke-linejoin="round"><path d="M5.800 1 1.200 5.700 5.800 10.400"/><path d="M11 1 6.400 5.700 11 10.400"/></g></svg>
<svg class="a" style="left:861.00px;top:109.00px;" width="11" height="12" viewBox="0 0 11 12"><path d="M9.600 1.200V10.600L5.200 7.200H1.600V4.600H5.200Z" fill="none" stroke="#252423" stroke-width="1.100" stroke-linejoin="round"/></svg>
<span class="t" style="left:864.20px;top:146.40px;font-size:12.5px;line-height:12.5px;color:#252423;transform:translate(-50%,-50%) rotate(90deg) scaleX(1.0183);transform-origin:50% 50%;font-weight:bold;">Filters</span>
<span class="t" style="left:885.40px;top:83.75px;font-size:13.5px;line-height:13.5px;color:#201f1e;transform:scaleX(0.9005);font-weight:bold;">Format</span>
<div class="a" style="left:990.00px;top:88.40px;width:1.90px;height:1.90px;background:#484644;border-radius:50%;"></div>
<div class="a" style="left:994.80px;top:88.40px;width:1.90px;height:1.90px;background:#484644;border-radius:50%;"></div>
<div class="a" style="left:999.60px;top:88.40px;width:1.90px;height:1.90px;background:#484644;border-radius:50%;"></div>
<svg class="a" style="left:1008.00px;top:84.50px;" width="12.5" height="11.5" viewBox="0 0 12.5 11.5"><g fill="none" stroke="#484644" stroke-width="1" stroke-linecap="round" stroke-linejoin="round"><path d="M1.200 1 5.800 5.700 1.200 10.400"/><path d="M6.400 1 11 5.700 6.400 10.400"/></g></svg>
<div class="a" style="left:884.40px;top:109.80px;width:134.40px;height:22.20px;background:#f3f2f1;border:1px solid #c8c6c4;border-radius:3px;"></div>
<svg class="a" style="left:890.50px;top:114.00px;" width="13" height="13" viewBox="0 0 13 13"><g fill="none" stroke="#605e5c" stroke-width="1"><circle cx="7.600" cy="5.200" r="3.600"/><path d="M5 7.900 1 12"/></g></svg>
<span class="t" style="left:908.70px;top:116.50px;font-size:12px;line-height:12px;color:#484644;transform:scaleX(0.8626);">Search</span>
<div class="a" style="left:878.40px;top:178.40px;width:146.80px;height:362.10px;background:#e1dfdd;"></div>
<div class="a" style="left:1020.80px;top:186.00px;width:3.80px;height:254.00px;background:#c8c6c4;"></div>
<div class="a" style="left:885.40px;top:185.00px;width:133.40px;height:141.50px;background:#f3f2f1;border-radius:3px 3px 0 0;"></div>
<svg class="a" style="left:884.60px;top:157.30px;" width="10" height="8" viewBox="0 0 10 8"><path d="M1 1.400 5.00 6 9.00 1.400" fill="none" stroke="#252423" stroke-width="1.150" stroke-linecap="round" stroke-linejoin="round"/></svg>
<span class="t" style="left:897.70px;top:156.30px;font-size:10.8px;line-height:10.8px;color:#252423;transform:scaleX(0.8695);font-weight:bold;">Page information</span>
<span class="t" style="left:891.40px;top:195.40px;font-size:11px;line-height:11px;color:#252423;transform:scaleX(0.8724);">Name</span>
<div class="a" style="left:891.20px;top:210.40px;width:121.40px;height:20.60px;background:#ffffff;border:1px solid #c8c6c4;border-radius:2.500px;"></div>
<span class="t" style="left:896.80px;top:215.90px;font-size:11px;line-height:11px;color:#484644;transform:scaleX(0.7922);">Sales</span>
<span class="t" style="left:891.40px;top:241.50px;font-size:11px;line-height:11px;color:#252423;transform:scaleX(0.8519);">Page type</span>
<div class="a" style="left:891.20px;top:256.00px;width:121.40px;height:21.00px;background:#ffffff;border:1px solid #c8c6c4;border-radius:2.500px;"></div>
<span class="t" style="left:898.30px;top:262.00px;font-size:11px;line-height:11px;color:#707070;transform:scaleX(0.9280);">Drillthrough</span>
<svg class="a" style="left:996.50px;top:263.00px;" width="11" height="8" viewBox="0 0 11 8"><path d="M1 1.400 5.50 6 10.00 1.400" fill="none" stroke="#323130" stroke-width="1.150" stroke-linecap="round" stroke-linejoin="round"/></svg>
<span class="t" style="left:891.40px;top:287.00px;font-size:11px;line-height:11px;color:#b3b0ad;transform:scaleX(0.8757);">Keep all filters</span>
<div class="a" style="left:986.00px;top:285.30px;width:26.20px;height:13.10px;background:#c8c6c4;border-radius:7px;"></div>
<span class="t" style="left:990.50px;top:288.95px;font-size:7.5px;line-height:7.5px;color:#e6e4e2;transform:scaleX(0.8996);">On</span>
<div class="a" style="left:1002.40px;top:287.70px;width:8.20px;height:8.20px;background:#ffffff;border-radius:50%;"></div>
<span class="t" style="left:891.40px;top:311.90px;font-size:11px;line-height:11px;color:#323130;transform:scaleX(0.8769);">Cross-report</span>
<div class="a" style="left:986.00px;top:309.80px;width:26.20px;height:13.90px;background:#ffffff;border:1px solid #605e5c;border-radius:7px;"></div>
<div class="a" style="left:990.40px;top:313.70px;width:6.00px;height:6.00px;background:#605e5c;border-radius:50%;"></div>
<span class="t" style="left:998.30px;top:313.85px;font-size:7.5px;line-height:7.5px;color:#484644;transform:scaleX(1.0440);">Off</span>
<div class="a" style="left:885.40px;top:326.50px;width:133.40px;height:126.50px;background:#f3f2f1;"></div>
<span class="t" style="left:891.40px;top:336.40px;font-size:11px;line-height:11px;color:#252423;transform:scaleX(0.9246);">Drill through from</span>
<div class="a" style="left:891.20px;top:351.20px;width:121.40px;height:93.30px;background:#f3f2f1;border:1px dotted #8a8886;"></div>
<div class="a" style="left:894.80px;top:355.40px;width:113.80px;height:25.40px;background:#f8f8f8;border:1px solid #a19f9d;border-radius:3px;"></div>
<span class="t" style="left:900.70px;top:363.70px;font-size:11px;line-height:11px;color:#323130;transform:scaleX(0.8413);">Total Sale Price</span>
<svg class="a" style="left:990.50px;top:362.50px;" width="12" height="12" viewBox="0 0 12 12"><path d="M1.300 1.300 10.700 10.700M10.700 1.300 1.300 10.700" fill="none" stroke="#252423" stroke-width="1.100" stroke-linecap="round"/></svg>
<div class="a" style="left:894.80px;top:384.80px;width:113.80px;height:25.50px;background:#f8f8f8;border:1px solid #a19f9d;border-radius:3px;"></div>
<span class="t" style="left:900.70px;top:393.20px;font-size:11px;line-height:11px;color:#323130;transform:scaleX(0.8910);">Total Profit</span>
<svg class="a" style="left:990.50px;top:392.00px;" width="12" height="12" viewBox="0 0 12 12"><path d="M1.300 1.300 10.700 10.700M10.700 1.300 1.300 10.700" fill="none" stroke="#252423" stroke-width="1.100" stroke-linecap="round"/></svg>
<div class="a" style="left:894.80px;top:414.30px;width:113.80px;height:25.20px;background:#ffffff;border:1px solid #a19f9d;border-radius:3px;"></div>
<span class="t" style="left:929.00px;top:422.60px;font-size:11px;line-height:11px;color:#201f1e;transform:scaleX(0.8676);font-weight:bold;">+Add data</span>
<div class="a" style="left:884.80px;top:458.30px;width:134.20px;height:82.20px;background:#f3f2f1;border-radius:4px 4px 0 0;"></div>
<svg class="a" style="left:890.60px;top:472.50px;" width="10.5" height="8" viewBox="0 0 10.5 8"><path d="M1 1.400 5.25 6 9.50 1.400" fill="none" stroke="#252423" stroke-width="1.150" stroke-linecap="round" stroke-linejoin="round"/></svg>
<span class="t" style="left:904.70px;top:471.50px;font-size:11px;line-height:11px;color:#252423;transform:scaleX(0.8574);font-weight:bold;">Drill through when</span>
<span class="t" style="left:891.40px;top:495.90px;font-size:11px;line-height:11px;color:#252423;transform:scaleX(0.8418);">Total Sale Price is</span>
<div class="a" style="left:891.20px;top:511.30px;width:121.40px;height:21.30px;background:#ffffff;border:1px solid #c8c6c4;border-radius:2.500px;"></div>
<span class="t" style="left:898.30px;top:517.40px;font-size:11px;line-height:11px;color:#707070;transform:scaleX(0.8697);">Summarized</span>
<svg class="a" style="left:996.50px;top:518.50px;" width="11" height="8" viewBox="0 0 11 8"><path d="M1 1.400 5.50 6 10.00 1.400" fill="none" stroke="#323130" stroke-width="1.150" stroke-linecap="round" stroke-linejoin="round"/></svg>
<div class="a" style="left:876.70px;top:72.00px;width:76.80px;height:36.80px;border:5.8px solid #e8692c;"></div>
<div class="a" style="left:878.40px;top:139.70px;width:148.60px;height:142.30px;border:5.8px solid #e8692c;"></div>
<div class="a" style="left:884.80px;top:326.00px;width:139.20px;height:127.00px;border:5.6px solid #e8692c;"></div>
<svg class="a" style="left:1032.50px;top:78.50px;" width="13" height="17" viewBox="0 0 13 17"><g fill="none" stroke="#55534f" stroke-width="1.150"><path d="M1 3.300V13.300C1 14.800 3.300 15.800 6.300 15.800S11.600 14.800 11.600 13.300V3.300"/><ellipse cx="6.300" cy="3.300" rx="5.300" ry="2.300"/></g></svg>
<svg class="a" style="left:1031.50px;top:107.50px;" width="16" height="16" viewBox="0 0 16 16"><g fill="none" stroke-width="1.150"><path d="M4.500 14.500H1V7H4.500M4.500 14.500V1H8.500V5" stroke="#55534f"/><path d="M8.500 4.500H11.500V6.500" stroke="#55534f"/><path d="M8.800 8.800V13.500C8.800 14.500 10.200 15.200 12 15.200S15.200 14.500 15.200 13.500V8.800" stroke="#f7941d"/><ellipse cx="12" cy="8.800" rx="3.200" ry="1.600" stroke="#f7941d"/></g></svg>
<div class="a" style="left:1026.50px;top:130.70px;width:23.50px;height:25.90px;background:#e1dfdd;"></div>
<svg class="a" style="left:1031.50px;top:135.00px;" width="16" height="18" viewBox="0 0 16 18"><g fill="none" stroke-width="1.150"><path d="M5 15.500H1.200V8H4.500V1.200H8.800V7" stroke="#55534f"/><path d="M8.800 5H11.800V7.500" stroke="#55534f"/><path d="M14.800 5.500 9.500 12.500" stroke="#605e5c" stroke-width="1.400"/><path d="M9.800 11.800C8 11.500 6.500 13 6.800 14.800 6.200 15.500 5.500 15.800 4.800 15.800 7 17.500 10.800 16.500 11 13.300Z" fill="#2b88d8" stroke="#2b88d8" stroke-width=".600"/></g></svg>
<svg class="a" style="left:1031.50px;top:164.00px;" width="14.5" height="14.5" viewBox="0 0 14.5 14.5"><path d="M7.200 .800V13.600M.800 7.200H13.600" fill="none" stroke="#55534f" stroke-width="1.200"/></svg>
<div class="a" style="left:1026.20px;top:518.20px;width:23.80px;height:0.80px;background:#e1dfdd;"></div>
<svg class="a" style="left:1030.80px;top:525.30px;" width="17" height="17" viewBox="0 0 17 17"><g fill="none" stroke="#55534f" stroke-width="1.100" stroke-linejoin="round"><path d="M16.03 7.49L16.03 9.51L14.20 10.01L13.60 11.46L14.54 13.11L13.11 14.54L11.46 13.60L10.01 14.20L9.51 16.03L7.49 16.03L6.99 14.20L5.54 13.60L3.89 14.54L2.46 13.11L3.40 11.46L2.80 10.01L0.97 9.51L0.97 7.49L2.80 6.99L3.40 5.54L2.46 3.89L3.89 2.46L5.54 3.40L6.99 2.80L7.49 0.97L9.51 0.97L10.01 2.80L11.46 3.40L13.11 2.46L14.54 3.89L13.60 5.54L14.20 6.99Z"/><circle cx="8.500" cy="8.500" r="2.700"/></g></svg>
<div class="a" style="left:4.00px;top:4.80px;width:1047.00px;height:1.20px;background:#737373;"></div>
<div class="a" style="left:4.00px;top:4.80px;width:1.20px;height:543.60px;background:#737373;"></div>
<div class="a" style="left:1049.80px;top:4.80px;width:1.20px;height:543.60px;background:#737373;"></div>
<div class="a" style="left:4.00px;top:547.20px;width:1047.00px;height:1.20px;background:#b4b4b4;"></div>
<div class="a" style="left:4.00px;top:547.20px;width:1.20px;height:1.20px;background:#737373;"></div>
<div class="a" style="left:137.60px;top:510.50px;width:64.30px;height:39.70px;border:3.3px solid #e8692c;"></div>
</body></html>
